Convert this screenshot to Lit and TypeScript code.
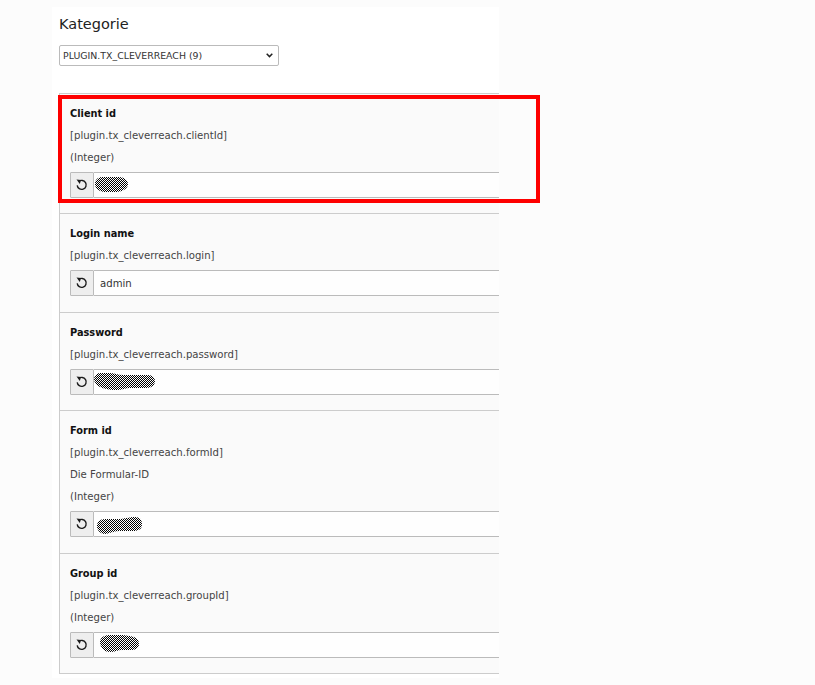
import { LitElement, html, css, svg } from "lit";
import { customElement } from "lit/decorators.js";
import { classMap } from "lit/directives/class-map.js";

interface Field {
  title: string;
  path: string;
  desc?: string;
  type?: string;
  value?: string;
  tall?: boolean;
  blob?: { d: string; w: number; h: number; x: number; y: number };
}

const FIELDS: Field[] = [
  {
    title: "Client id",
    path: "[plugin.tx_cleverreach.clientId]",
    type: "(Integer)",
    blob: { w: 33, h: 16, x: 1, y: 4, d: "M6 1 H24 C30 1 33 5 33 8 C33 12 29 15 22 16 H9 C3 15 0 12 0 8 C0 4 2 2 6 1 Z" },
  },
  { title: "Login name", path: "[plugin.tx_cleverreach.login]", value: "admin", tall: true },
  {
    title: "Password",
    path: "[plugin.tx_cleverreach.password]",
    blob: { w: 61, h: 17, x: 0, y: 4, d: "M5 0 H15 C20 0 24 2 30 2 H54 C59 2 61 5 61 8 C61 12 58 15 52 15 H36 C32 15 28 17 22 17 C14 17 8 15 4 13 C1 10 0 8 0 6 C0 3 2 1 5 0 Z" },
  },
  {
    title: "Form id",
    path: "[plugin.tx_cleverreach.formId]",
    desc: "Die Formular-ID",
    type: "(Integer)",
    tall: true,
    blob: { w: 45, h: 17, x: 3, y: 6, d: "M8 2 H20 C28 2 32 0 38 0 C43 0 45 3 45 7 C45 12 42 14 36 14 H22 C16 14 12 17 8 17 C3 17 0 13 0 9 C0 5 3 2 8 2 Z" },
  },
  {
    title: "Group id",
    path: "[plugin.tx_cleverreach.groupId]",
    type: "(Integer)",
    blob: { w: 39, h: 17, x: 6, y: 3, d: "M9 0 H22 C26 0 30 1 34 2 C38 4 39 6 39 9 C39 13 36 15 30 15 H22 C18 15 15 17 10 17 C4 17 0 12 0 7 C0 3 4 0 9 0 Z" },
  },
];

@customElement("app-root")
export class AppRoot extends LitElement {
  static styles = css`
    :host {
      display: block;
      height: 685px;
      background: #fcfcfc;
      font-family: "DejaVu Sans", Verdana, sans-serif;
      color: #333;
      overflow: hidden;
      position: relative;
    }
    .panel {
      margin: 7px 0 0 52px;
      width: 447px;
      height: 671px;
      box-sizing: border-box;
      background: #fff;
      padding: 7px 0 0 7px;
      overflow: hidden;
    }
    h1 {
      margin: 0;
      font-size: 14.5px;
      line-height: 20px;
      font-weight: 400;
      color: #222;
    }
    .select {
      position: relative;
      margin-top: 11px;
      width: 220px;
      height: 21px;
    }
    select {
      display: block;
      appearance: none;
      width: 100%;
      height: 100%;
      box-sizing: border-box;
      font-family: inherit;
      font-size: 9.4px;
      color: #333;
      background: #fff;
      border: 1px solid #bbb;
      border-radius: 2px;
      padding: 0 0 0 3px;
    }
    .chev {
      position: absolute;
      left: 207px;
      top: 8px;
      display: block;
    }
    .list {
      margin-top: 27px;
      width: 480px;
      border-left: 1px solid #ccc;
      border-top: 1px solid #ccc;
    }
    .card {
      background: #fafafa;
      padding: 9px 0 15px 10px;
      border-bottom: 1px solid #ccc;
    }
    .card.tall {
      padding-bottom: 16px;
    }
    .line {
      font-size: 10.15px;
      line-height: 22px;
      color: #444;
    }
    .title {
      font-weight: 700;
      font-size: 9.8px;
      color: #111;
    }
    .row {
      display: flex;
      height: 26px;
      margin-top: 3px;
      position: relative;
    }
    .reset {
      width: 24px;
      height: 26px;
      box-sizing: border-box;
      flex: none;
      padding: 0;
      display: flex;
      align-items: center;
      justify-content: center;
      background: #eee;
      border: 1px solid #bbb;
      border-radius: 1px;
    }
    .reset svg {
      display: block;
    }
    input {
      flex: 1;
      min-width: 0;
      box-sizing: border-box;
      height: 26px;
      margin-left: 0;
      padding: 0 6px;
      font-family: inherit;
      font-size: 10.15px;
      color: #333;
      background: #fefefe;
      border: 1px solid #bbb;
      border-left: 0;
      outline: 0;
    }
    .blob {
      position: absolute;
      left: 24px;
      top: 0;
      display: block;
    }
    .marker {
      position: absolute;
      left: 58px;
      top: 95px;
      width: 482px;
      height: 108px;
      box-sizing: border-box;
      border: 4px solid #fe0000;
      pointer-events: none;
    }
  `;

  private blob(f: Field, i: number) {
    const b = f.blob;
    if (!b) return null;
    return html`<svg class="blob" width=${b.w} height=${b.h} viewBox="0 0 ${b.w} ${b.h}"
      style="left: ${24 + b.x}px; top: ${b.y}px">
      ${svg`<defs><pattern id="chk${i}" width="2" height="2" patternUnits="userSpaceOnUse">
        <rect width="2" height="2" fill="#fff" shape-rendering="crispEdges"></rect>
        <rect width="1" height="1" fill="#000" shape-rendering="crispEdges"></rect>
        <rect x="1" y="1" width="1" height="1" fill="#000" shape-rendering="crispEdges"></rect>
      </pattern></defs>
      <path d=${b.d} fill="url(#chk${i})"></path>`}
    </svg>`;
  }

  render() {
    return html`
      <div class="panel">
        <h1>Kategorie</h1>
        <div class="select">
          <select><option>PLUGIN.TX_CLEVERREACH (9)</option></select>
          <svg class="chev" width="7" height="5" viewBox="0 0 7 5" fill="none">
            <path d="M0.7 0.8 L3.5 3.6 L6.3 0.8" stroke="#222" stroke-width="1.5"></path>
          </svg>
        </div>
        <div class="list">
          ${FIELDS.map(
            (f, i) => html`
              <div class=${classMap({ card: true, tall: !!f.tall })}>
                <div class="line title">${f.title}</div>
                <div class="line">${f.path}</div>
                ${f.desc ? html`<div class="line">${f.desc}</div>` : null}
                ${f.type ? html`<div class="line">${f.type}</div>` : null}
                <div class="row">
                  <button class="reset" aria-label="Reset">
                    <svg width="12" height="12" viewBox="0 0 12 12" fill="none">
                      <path d="M2.6 2.6 A4.5 4.5 0 1 1 1.2 6.4" stroke="#1a1a1a" stroke-width="1.4"></path>
                      <path d="M0.5 0.6 L5 0.9 L3.8 4.9 Z" fill="#1a1a1a"></path>
                    </svg>
                  </button>
                  <input .value=${f.value ?? ""} />
                  ${this.blob(f, i)}
                </div>
              </div>
            `
          )}
        </div>
      </div>
      <div class="marker"></div>
    `;
  }
}
